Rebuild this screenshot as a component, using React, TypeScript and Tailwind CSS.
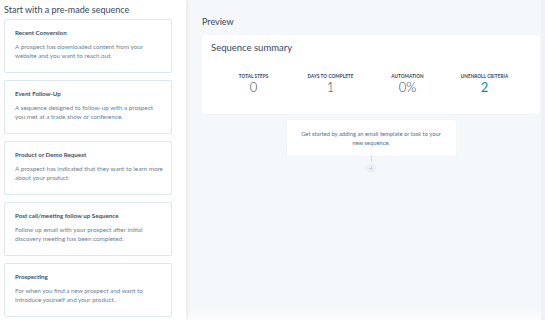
import React from "react";

const cards = [
  {
    title: "Recent Conversion",
    lines: ["A prospect has downloaded content from your", "website and you want to reach out."],
  },
  {
    title: "Event Follow-Up",
    lines: ["A sequence designed to follow-up with a prospect", "you met at a trade show or conference."],
  },
  {
    title: "Product or Demo Request",
    lines: ["A prospect has indicated that they want to learn more", "about your product."],
  },
  {
    title: "Post call/meeting follow up Sequence",
    lines: ["Follow up email with your prospect after initial", "discovery meeting has been completed."],
  },
  {
    title: "Prospecting",
    lines: ["For when you find a new prospect and want to", "introduce yourself and your product."],
  },
];

const stats = [
  { label: "TOTAL STEPS", value: "0", teal: false },
  { label: "DAYS TO COMPLETE", value: "1", teal: false },
  { label: "AUTOMATION", value: "0%", teal: false },
  { label: "UNENROLL CRITERIA", value: "2", teal: true },
];

export default function App() {
  return (
    <div
      className="flex h-[320px] w-[545px] overflow-hidden bg-[#f5f8fa] text-[#33475b]"
      style={{ fontFamily: "Lato, 'Open Sans', sans-serif" }}
    >
      {/* Left panel */}
      <div className="relative z-10 flex h-full w-[186px] shrink-0 flex-col bg-white pl-[4px] pr-[14px] shadow-[2px_0_3px_rgba(0,0,0,0.05)]">
        <div className="pt-[3px] text-[9px] font-normal leading-[14px] text-[#33475b]">
          Start with a pre-made sequence
        </div>
        <div className="mt-[2px] flex flex-col gap-[7px]">
          {cards.map((c) => (
            <div
              key={c.title}
              className="h-[54px] rounded-[2px] border border-[#dbe9ef] pl-[10px] pr-[4px] pt-[9px]"
            >
              <div className="text-[6.2px] font-bold leading-[8px] text-[#3d5166]">
                {c.title}
              </div>
              <div className="mt-[5px] text-[6.3px] leading-[9px] text-[#6a7f94]">
                {c.lines.map((l) => (
                  <div key={l} className="whitespace-nowrap">
                    {l}
                  </div>
                ))}
              </div>
            </div>
          ))}
        </div>
      </div>

      {/* Right panel */}
      <div className="relative flex h-full flex-1 flex-col pl-[16px] pr-[5px]">
        <div className="pt-[16px] text-[9px] leading-[12px] text-[#33475b]">Preview</div>
        <div className="mt-[7px] h-[79px] rounded-[2px] bg-white shadow-[0_0_2px_rgba(0,0,0,0.04)]">
          <div className="pl-[9px] pt-[7px] text-[9.5px] leading-[12px] text-[#33475b]">
            Sequence summary
          </div>
          <div className="mt-[19px] grid grid-cols-4 pl-[13px] pr-[17px]">
            {stats.map((s) => (
              <div key={s.label} className="flex flex-col items-center">
                <div className="text-[4.6px] font-bold leading-[6px] tracking-[0.1px] text-[#33475b]">
                  {s.label}
                </div>
                <div
                  className={`mt-[1px] text-[13px] leading-[15px] ${
                    s.teal ? "font-normal text-[#0091ae]" : "font-light text-[#33475b]"
                  }`}
                >
                  {s.value}
                </div>
              </div>
            ))}
          </div>
        </div>

        <div className="mt-[6px] flex flex-col items-center">
          <div className="flex h-[36px] w-[169px] items-center justify-center rounded-[2px] bg-white px-[11px] text-center text-[5.8px] leading-[9px] text-[#516f90] shadow-[0_0_2px_rgba(0,0,0,0.05)]">
            Get started by adding an email template or task to your new sequence.
          </div>
          <div className="h-[6px] w-px bg-[#cbd6e2]" />
          <div className="mt-[1px] flex h-[10px] w-[10px] items-center justify-center rounded-full bg-[#eaf0f6] text-[7px] leading-none text-[#b0c1d4]">
            +
          </div>
        </div>

        <div className="absolute bottom-0 left-0 right-0 h-[10px] bg-gradient-to-b from-transparent to-[#fbfcfd]" />
        <div className="absolute bottom-0 right-0 top-0 w-[4px] bg-[#f0f2f5]" />
      </div>
    </div>
  );
}
